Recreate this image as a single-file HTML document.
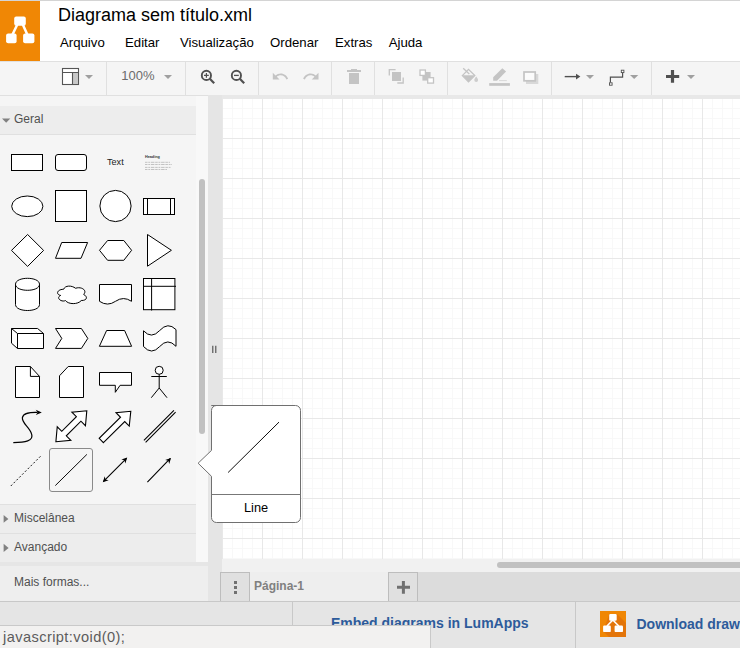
<!DOCTYPE html>
<html><head><meta charset="utf-8">
<style>
*{margin:0;padding:0;box-sizing:border-box}
html,body{width:740px;height:648px;overflow:hidden;background:#fff;font-family:"Liberation Sans",sans-serif;position:relative}
.a{position:absolute}
#topline{left:0;top:0;width:740px;height:1px;background:#d4d4d4}
#logo{left:0;top:1px;width:40px;height:60px;background:#f08705}
#title{left:58px;top:5px;font-size:18px;color:#000;white-space:nowrap}
.menu{top:35px;font-size:13.2px;color:#000;white-space:nowrap}
#toolbar{left:0;top:61px;width:740px;height:35px;background:#f5f5f5;border-top:1px solid #e0e0e0;border-bottom:1px solid #e0e0e0}
.sep{top:62px;width:1px;height:33px;background:#e0e0e0}
.dd{width:0;height:0;border-left:4px solid transparent;border-right:4px solid transparent;border-top:4px solid #999}
#sidebar{left:0;top:96px;width:208px;height:470px;background:#f5f5f5}
.stxt{font-size:12px;color:#505050;white-space:nowrap}
.hdr{left:0;width:196px;height:29px;background:#ededed;border-bottom:1px solid #e0e0e0;font-size:12px;color:#505050}
#track{left:196px;top:96px;width:12px;height:466px;background:#f8f8f8}
#thumb{left:199px;top:179px;width:6px;height:255px;background:#c1c1c1;border-radius:3px}
#split{left:208px;top:95px;width:14px;height:506px;background:#e5e5e5}
#canvas{left:222px;top:97px;width:518px;height:474px;background:#fff}
</style></head><body>
<div class="a" id="topline"></div>
<div class="a" id="logo">
<svg width="40" height="60" viewBox="0 0.8 40 60">
<path d="M17.2 24.5L12.4 34.5M22.9 24.5L27.4 34.5" stroke="#fff" stroke-width="2.5" fill="none"/>
<g fill="#fff">
<rect x="14.2" y="16.4" width="11.6" height="9.2" rx="2"/>
<rect x="6.1" y="33.4" width="10.5" height="9.6" rx="2"/>
<rect x="23.1" y="33.4" width="11.3" height="9.6" rx="2"/>
</g></svg>
</div>
<div class="a" id="title">Diagrama sem título.xml</div>
<div class="a menu" style="left:60px">Arquivo</div>
<div class="a menu" style="left:125px">Editar</div>
<div class="a menu" style="left:180px">Visualização</div>
<div class="a menu" style="left:270px">Ordenar</div>
<div class="a menu" style="left:335px">Extras</div>
<div class="a menu" style="left:388.7px">Ajuda</div>

<div class="a" id="toolbar"></div>
<div class="a sep" style="left:106px"></div>
<div class="a sep" style="left:185px"></div>
<div class="a sep" style="left:258px"></div>
<div class="a sep" style="left:331px"></div>
<div class="a sep" style="left:374px"></div>
<div class="a sep" style="left:447px"></div>
<div class="a sep" style="left:551px"></div>
<div class="a sep" style="left:651px"></div>


<svg class="a" style="left:0;top:61px" width="740" height="37" viewBox="0 61 740 37">
<!-- layout -->
<rect x="62.5" y="68.5" width="16" height="16" fill="#fff" stroke="#555" stroke-width="1.1"/>
<rect x="73" y="73" width="5" height="11" fill="#c8c8c8"/>
<path d="M62.5 72.5H78.5M72.5 72.5V84.5" stroke="#555" stroke-width="1.1" fill="none"/>
<path d="M85 75H93L89 79Z" fill="#a0a0a0"/>
<text x="121.3" y="80.3" font-size="13" fill="#6c6c6c" font-family="Liberation Sans">100%</text>
<path d="M164 75H172L168 79Z" fill="#a0a0a0"/>
<!-- zoom in/out -->
<g stroke="#505050" fill="none" stroke-width="1.9">
<circle cx="206.4" cy="75.4" r="4.6"/><path d="M209.8 78.8L214.2 83.2" stroke-width="2.2"/>
<path d="M204 75.4H208.8M206.4 73V77.8" stroke-width="1.2"/>
<circle cx="236.4" cy="75.4" r="4.6"/><path d="M239.8 78.8L244.2 83.2" stroke-width="2.2"/>
<path d="M234 75.4H238.8" stroke-width="1.3"/>
</g>
<!-- undo redo -->
<path transform="translate(271.3 67.45) scale(0.75)" fill="#c4c4c4" d="M12.5 8c-2.65 0-5.05.99-6.9 2.6L2 7v9h9l-3.62-3.62c1.39-1.160 3.16-1.88 5.12-1.88 3.54 0 6.55 2.31 7.6 5.5l2.37-.78C21.08 11.03 17.15 8 12.5 8z"/>
<path transform="translate(302 67.45) scale(0.75)" fill="#c4c4c4" d="M18.4 10.6C16.550 8.99 14.15 8 11.5 8c-4.65 0-8.58 3.03-9.96 7.22L3.9 16c1.05-3.19 4.05-5.5 7.6-5.5 1.95 0 3.73.72 5.12 1.88L13 16h9V7l-3.6 3.6z"/>
<!-- delete -->
<g fill="#c4c4c4"><rect x="347" y="70" width="14" height="2"/><rect x="351" y="69" width="6" height="1.5"/><rect x="349" y="73" width="10" height="11"/></g>
<!-- to front -->
<g fill="none" stroke="#c4c4c4" stroke-width="1.3">
<path d="M389.3 75.4V69.7H395.6"/><path d="M403.2 77.4V83H397.3"/>
</g>
<rect x="392" y="72" width="9" height="9" fill="#c4c4c4"/>
<!-- to back -->
<rect x="422.4" y="72" width="8.2" height="8.6" fill="#c4c4c4"/>
<rect x="420" y="70" width="5.4" height="5.4" fill="#fff" stroke="#c4c4c4" stroke-width="1.3"/>
<rect x="427.7" y="77.7" width="5.8" height="5.4" fill="#fff" stroke="#c4c4c4" stroke-width="1.3"/>
<!-- fill -->
<path d="M462.3 75.6L468.5 69.4L474.8 75.6L468.5 81.8Z" fill="none" stroke="#c4c4c4" stroke-width="1.3"/>
<path d="M462.3 75.3H474.8L468.5 81.8Z" fill="#c4c4c4"/>
<path d="M463.2 68.2L469.3 74" stroke="#c4c4c4" stroke-width="1.3"/>
<path d="M476.2 76.6C475.1 78.2 474.3 79.2 474.3 80A1.9 1.9 0 0 0 478.1 80C478.1 79.2 477.3 78.2 476.2 76.6Z" fill="#cdcdcd"/>
<!-- line color -->
<path d="M493.2 77.3L502.3 68.2L506.1 71.4L497 80.7H493.2Z" fill="#c4c4c4"/>
<path d="M499 80.6H506.8" stroke="#d0d0d0" stroke-width="0.8"/>
<rect x="489.2" y="83.1" width="20.7" height="2.7" fill="#c4c4c4"/>
<!-- shadow -->
<rect x="526" y="74" width="12.3" height="10" fill="#d8d8d8"/>
<rect x="524" y="72" width="11.2" height="8.8" fill="#fbfbfb" stroke="#c4c4c4" stroke-width="1.7"/>
<!-- connection -->
<path d="M564.7 76.6H578" stroke="#505050" stroke-width="1.4"/>
<path d="M576 73.8L580.4 76.6L576 79.4Z" fill="#505050"/>
<path d="M586 75H594L590 79Z" fill="#a0a0a0"/>
<path d="M610.4 82.4V77.2H622.6V72.6" stroke="#505050" stroke-width="1.2" fill="none"/>
<rect x="609.5" y="82.8" width="2.6" height="2.4" fill="#fff" stroke="#505050" stroke-width="0.9"/>
<rect x="621.3" y="70.2" width="2.6" height="2.4" fill="#fff" stroke="#505050" stroke-width="0.9"/>
<path d="M630 75H638.3L634.15 79Z" fill="#a0a0a0"/>
<!-- plus -->
<path d="M666 76.5H679.2M672.5 70.1V82.7" stroke="#505050" stroke-width="3.2"/>
<path d="M687 75H695L691 79Z" fill="#a0a0a0"/>
</svg>

<div class="a" id="sidebar"></div>
<div class="a" id="track"></div>
<div class="a" id="thumb"></div>
<div class="a" id="split"></div>
<svg class="a" style="left:208px;top:340px" width="14" height="20"><path d="M4.8 5.8V13M7.8 5.8V13" stroke="#4a4a4a" stroke-width="1.1"/></svg>

<svg class="a" style="left:222px;top:98px" width="518" height="461">
<defs>
<pattern id="minor" width="10" height="10" patternUnits="userSpaceOnUse"><path d="M0 0.5H10M0.5 0V10" stroke="#f8f8f8" stroke-width="1" fill="none"/></pattern>
<pattern id="major" width="40" height="40" patternUnits="userSpaceOnUse"><path d="M0 0.5H40M0.5 0V40" stroke="#e8e8e8" stroke-width="1" fill="none"/></pattern>
</defs>
<rect width="518" height="461" fill="#fff"/>
<rect width="518" height="461" fill="url(#minor)"/>
<rect width="518" height="461" fill="url(#major)"/>
</svg>

<div class="a" style="left:222px;top:95px;width:518px;height:3px;background:#e8e8e8"></div>
<div class="a" style="left:222px;top:559px;width:518px;height:13px;background:#f1f1f1"></div>
<div class="a" style="left:497px;top:562px;width:250px;height:6px;background:#c1c1c1;border-radius:3px"></div>

<div class="a hdr" style="top:106px"></div>
<div class="a hdr" style="top:504px;height:30px;border-top:1px solid #e0e0e0"></div>
<div class="a hdr" style="top:534px"></div>
<svg class="a" style="left:0;top:106px" width="196" height="456">
<path d="M2 12.5H10.3L6.15 16.8Z" fill="#808080"/>
<path d="M3.6 409V416.8L8.4 412.9Z" fill="#808080"/>
<path d="M3.6 437.8V446L8.6 441.9Z" fill="#808080"/>
</svg>
<div class="a stxt" style="left:14px;top:112px">Geral</div>
<div class="a stxt" style="left:14px;top:510.5px">Miscelânea</div>
<div class="a stxt" style="left:14px;top:539.5px">Avançado</div>

<div class="a" style="left:0;top:562px;width:208px;height:4px;background:#e6e6e6"></div>
<div class="a" style="left:0;top:566px;width:208px;height:35px;background:#eeeeee"></div>
<div class="a stxt" style="left:14px;top:575px">Mais formas...</div>

<!-- tab bar -->
<div class="a" style="left:222px;top:572px;width:518px;height:29px;background:#dcdcdc"></div>
<div class="a" style="left:220px;top:572px;width:30px;height:29px;background:#e0e0e0;border:1px solid #bdbdbd;border-bottom:none"></div>
<div class="a" style="left:234px;top:581px;width:3px;height:3px;background:#707070"></div>
<div class="a" style="left:234px;top:586px;width:3px;height:3px;background:#707070"></div>
<div class="a" style="left:234px;top:591px;width:3px;height:3px;background:#707070"></div>
<div class="a" style="left:250px;top:572px;width:138px;height:29px;background:#eeeeee"></div>
<div class="a" style="left:254px;top:579px;font-size:12px;font-weight:bold;color:#808080;white-space:nowrap">Página-1</div>
<div class="a" style="left:388px;top:572px;width:30px;height:29px;background:#e0e0e0;border:1px solid #bdbdbd;border-bottom:none"></div>
<svg class="a" style="left:388px;top:572px" width="30" height="29"><path d="M9 15.2H22M15.4 9V21.8" stroke="#707070" stroke-width="3"/></svg>

<!-- banner -->
<div class="a" style="left:0;top:601px;width:740px;height:47px;background:#e5e5e5;border-top:1px solid #c8c8c8"></div>
<div class="a" style="left:292px;top:602px;width:1px;height:46px;background:#c8c8c8"></div>
<div class="a" style="left:575px;top:602px;width:1px;height:46px;background:#c8c8c8"></div>
<div class="a" style="left:331px;top:614.5px;font-size:14px;font-weight:bold;color:#2d5b9b;white-space:nowrap">Embed diagrams in LumApps</div>
<div class="a" style="left:636.5px;top:615.5px;font-size:14px;font-weight:bold;color:#2d5b9b;white-space:nowrap">Download draw.io</div>
<svg class="a" style="left:600px;top:611px" width="26" height="26">
<rect width="26" height="26" fill="#f08705"/>
<path d="M26 26H9L3 20L9.5 3L17 3L26 12Z" fill="#d9660e" opacity="0.55"/>
<path d="M12.8 9L7 15M12.8 9L18.8 15" stroke="#fff" stroke-width="1.6"/>
<g fill="#fff"><rect x="9.2" y="2.9" width="7.5" height="6.8" rx="1.2"/><rect x="3.1" y="14.5" width="7.7" height="6.6" rx="1.2"/><rect x="14.6" y="14.5" width="8.4" height="6.6" rx="1.2"/></g>
</svg>

<!-- status bar -->
<div class="a" style="left:0;top:625px;width:431px;height:23px;background:#f2f1f0;border-top:1px solid #c9c9c9;border-right:1px solid #c9c9c9"></div>
<div class="a" style="left:3px;top:628.7px;font-size:14.6px;letter-spacing:0.42px;color:#5c5c5c;white-space:nowrap">javascript:void(0);</div>

<!-- popup -->
<svg class="a" style="left:196px;top:404px" width="106" height="120">
<path d="M15.5 1.5H99.5A5 5 0 0 1 104.5 6.5V113.5A5 5 0 0 1 99.5 118.5H20.5A5 5 0 0 1 15.5 113.5V72.3L2.1 59.2L15.5 46.4V6.5A5 5 0 0 1 20.5 1.5Z" fill="#fff" stroke="#707070" stroke-width="1"/>
<path d="M15.5 90.5H104.5" stroke="#777" stroke-width="1"/>
<path d="M32.1 68.5L83 18.1" stroke="#000" stroke-width="0.95"/>
</svg>
<div class="a" style="left:244px;top:500px;font-size:12.8px;color:#000;white-space:nowrap">Line</div>



<svg class="a" style="left:0;top:134px" width="196" height="370" viewBox="0 134 196 370">
<g fill="#fff" stroke="#000" stroke-width="1">
<rect x="11.5" y="154.5" width="31" height="16"/>
<rect x="55.5" y="154.5" width="31" height="16" rx="2.5"/>
<ellipse cx="27.3" cy="206.3" rx="15.6" ry="10.3"/>
<rect x="55.5" y="190.5" width="31" height="31"/>
<circle cx="115.5" cy="206" r="15.6"/>
<rect x="143.5" y="198.5" width="31" height="16"/>
<path d="M147.5 198.5V214.5M170.5 198.5V214.5" fill="none"/>
<path d="M27.6 234.5L43.6 250.4L27.6 266.4L11.5 250.4Z"/>
<path d="M61.7 242.5H87.6L81 258.3H55.5Z"/>
<path d="M107.6 240.5H123.8L131.6 250.3L123.8 260.3H107.6L99.5 250.3Z"/>
<path d="M147.5 234.5L171.4 250.3L147.5 266.2Z"/>
<path d="M15.5 284.3C15.5 276.3 39.5 276.3 39.5 284.3V304.5C39.5 312.5 15.5 312.5 15.5 304.5Z"/>
<path d="M15.5 284.3C15.5 292.3 39.5 292.3 39.5 284.3" fill="none"/>
<path d="M63.55 289.30C57.12 289.30 55.51 294.41 60.65 295.43C55.51 297.68 61.30 302.58 65.48 300.54C68.37 304.62 78.01 304.62 81.22 300.54C87.65 300.54 87.65 296.45 83.64 294.41C87.65 290.33 81.22 286.24 75.60 288.28C71.58 285.22 65.15 285.22 63.55 289.30Z"/>
<path d="M99.5 284.5H131.5V301.3Q123.5 295.8 115.5 301.3T99.5 301.3Z"/>
<rect x="143.5" y="278.5" width="31.4" height="31.2"/>
<path d="M143.5 286.3H176M151.6 278.5V310.5" fill="none"/>
<path d="M11.5 328.5H37.6L43.5 333.5V348.5H17.5L11.5 343.2Z"/>
<path d="M11.5 328.5L17.5 333.5H43.5M17.5 333.5V348.5" fill="none"/>
<path d="M55.5 328.5H81.4L87.8 338.4L81.4 348.4H55.5L61.8 338.4Z"/>
<path d="M106.6 330.5H124.6L131.6 346.3H99.4Z"/>
<path d="M143.5 330.8Q151.5 339.5 159.7 330.5T176 329.6V346.3Q167.8 337.5 159.7 346.5T143.5 346.5Z"/>
<path d="M15.5 366.5H30.4L39.5 376.4V397.5H15.5Z"/>
<path d="M30.4 366.5V376.4H39.5" fill="none"/>
<path d="M68.2 366.5H83.5V397.5H59.5V375.8Z"/>
<path d="M99.5 372.5H131.5V385.3H120.1L115.3 392.3V385.3H99.5Z"/>
<circle cx="159.2" cy="370.3" r="4"/>
<path d="M159.2 374.3V388M151.3 376.5H166.8M151.3 397.7L159.2 388L167 397.7" fill="none"/>
</g>
<g fill="none" stroke="#000">
<path d="M13.3 442.6C25 442.6 34 441 31.6 434C29.5 427 21.5 423 22.4 417.5C23.5 412.5 30 412.2 37.5 412.4" stroke-width="1.2"/>
<path d="M143.9 440.4L173.9 410.3M145.6 442.3L175.6 412.2" stroke-width="1.1"/>
<path d="M10.8 486L41.8 455" stroke-dasharray="2 2" stroke-width="0.9"/>
<path d="M103.5 481.4L126.5 458.4M147.4 482.2L170.3 458.4" stroke-width="1.1"/>
</g>
<g fill="#000">
<path d="M41.80 412.40 L35.80 415.10 L37.60 412.40 L35.80 409.70 Z"/>
<path d="M127.20 457.60 L125.31 463.47 L124.49 460.33 L121.34 459.53 Z"/>
<path d="M102.80 482.20 L104.71 476.33 L105.52 479.48 L108.67 480.29 Z"/>
<path d="M171.00 458.00 L169.21 463.91 L168.34 460.78 L165.17 460.03 Z"/>
</g>
<g fill="#fff" stroke="#000" stroke-width="1.1">
<path d="M55.90 441.70 L70.82 440.36 L66.29 435.83 L80.93 421.19 L85.46 425.72 L86.80 410.80 L71.88 412.14 L76.41 416.67 L61.77 431.31 L57.24 426.78Z"/>
<path d="M103.41 442.63 L124.74 421.52 L129.24 426.07 L130.80 411.30 L116.01 412.71 L120.52 417.26 L99.19 438.37Z"/>
</g>
<rect x="49.5" y="448.5" width="43" height="43" rx="2.5" fill="none" stroke="#8a8a8a" stroke-width="1"/>
<path d="M55.3 485.6L86.9 454.4" stroke="#000" stroke-width="0.95"/>
<text x="107" y="165.2" font-size="9.1" fill="#222" font-family="Liberation Sans">Text</text>
<text x="144.9" y="158.2" font-size="4.4" font-weight="bold" fill="#333" font-family="Liberation Sans" textLength="15" lengthAdjust="spacingAndGlyphs">Heading</text>
<g stroke="#a0a0a0" stroke-width="0.6" stroke-dasharray="2.5 0.8 1.8 0.8 3.5 0.8">
<path d="M145 162.3H170M145 164.5H172M145 167.4H171M145 169.5H167"/>
</g>
</svg>

</body></html>
